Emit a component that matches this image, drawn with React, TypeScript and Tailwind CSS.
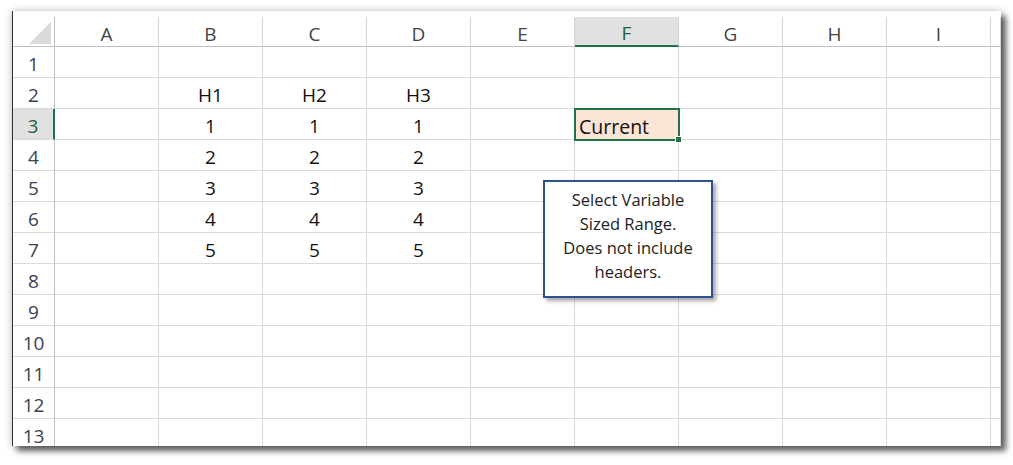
import React from "react";

const columns = ["A", "B", "C", "D", "E", "F", "G", "H", "I", ""];

// cell values keyed by row number, then column letter
const values: Record<number, Record<string, string>> = {
    2: { B: "H1", C: "H2", D: "H3" },
    3: { B: "1", C: "1", D: "1", F: "Current" },
    4: { B: "2", C: "2", D: "2" },
    5: { B: "3", C: "3", D: "3" },
    6: { B: "4", C: "4", D: "4" },
    7: { B: "5", C: "5", D: "5" },
};

const rows = Array.from({ length: 13 }, (_, i) => i + 1);

const activeRow = 3;
const activeCol = "F";

const font = { fontFamily: '"Open Sans", "Noto Sans", sans-serif' };

const CornerCell: React.FC = () => (
    <div className="relative bg-white border-r border-b border-[#bfbfbf]">
        <svg width="22" height="22" className="absolute left-[16px] top-[5px]">
            <polygon points="22,0 22,22 0,22" fill="#dadada" />
        </svg>
    </div>
);

const ColumnHeader: React.FC<{ name: string }> = ({ name }) => {
    const active = name === activeCol;
    return (
        <div
            className={`flex items-end justify-center pb-[1px] text-[19px] leading-[22px] border-r border-[#d4d4d4] ${
                active
                    ? "bg-[#e1e1e1] text-[#21603c] border-b-2 border-b-[#217346]"
                    : "bg-white text-[#444] border-b border-b-[#bfbfbf]"
            }`}
        >
            {name}
        </div>
    );
};

const RowHeader: React.FC<{ row: number }> = ({ row }) => {
    const active = row === activeRow;
    return (
        <div
            className={`flex items-end justify-center pb-[2px] text-[19px] leading-[22px] border-b border-[#dadada] ${
                active
                    ? "bg-[#e1e1e1] text-[#21603c] border-r-2 border-r-[#217346]"
                    : "bg-white text-[#3b4250] border-r border-r-[#bfbfbf]"
            }`}
        >
            {row}
        </div>
    );
};

const Cell: React.FC<{ row: number; col: string }> = ({ row, col }) => {
    const value = values[row]?.[col] ?? "";
    const selected = row === activeRow && col === activeCol;

    if (selected) {
        return (
            <div className="relative bg-[#fce4d6] border-r border-b border-[#dadada]">
                <div className="absolute -left-[1px] -top-[1px] w-[106px] h-[33px] border-2 border-[#217346] flex items-end pl-[3px] pb-[1px] text-[19.5px] leading-[22px] text-[#111]">
                    {value}
                    <div className="absolute -right-[4px] -bottom-[4px] w-[7px] h-[7px] bg-[#217346] border border-white" />
                </div>
            </div>
        );
    }

    return (
        <div className="flex items-end justify-center pb-[2px] text-[19px] leading-[22px] text-[#111] bg-white border-r border-b border-[#dadada]">
            {value}
        </div>
    );
};

const Callout: React.FC = () => (
    <div className="absolute left-[530px] top-[169px] w-[170px] h-[118px] bg-white border-2 border-[#2f528f] shadow-[3px_3px_4px_rgba(0,0,0,0.35)] pt-[6px] text-center text-[16.5px] leading-[24px] text-[#222]">
        <div>Select Variable</div>
        <div>Sized Range.</div>
        <div>Does not include</div>
        <div>headers.</div>
    </div>
);

export default function App() {
    return (
        <div className="w-[1013px] h-[465px] bg-white pl-[12px] pt-[11px]" style={font}>
            <div className="relative w-[989px] h-[435px] overflow-hidden bg-white border-l border-[#333] pt-[6px] shadow-[5px_5px_6px_rgba(0,0,0,0.6),0_0_8px_rgba(0,0,0,0.25)]">
                <div className="grid grid-cols-[42px_repeat(9,104px)_1fr] grid-rows-[30px_repeat(13,31px)]">
                    <CornerCell />
                    {columns.map((c, i) => (
                        <ColumnHeader key={i} name={c} />
                    ))}
                    {rows.map((r) => (
                        <React.Fragment key={r}>
                            <RowHeader row={r} />
                            {columns.map((c, i) => (
                                <Cell key={i} row={r} col={c} />
                            ))}
                        </React.Fragment>
                    ))}
                </div>
                <Callout />
            </div>
        </div>
    );
}
